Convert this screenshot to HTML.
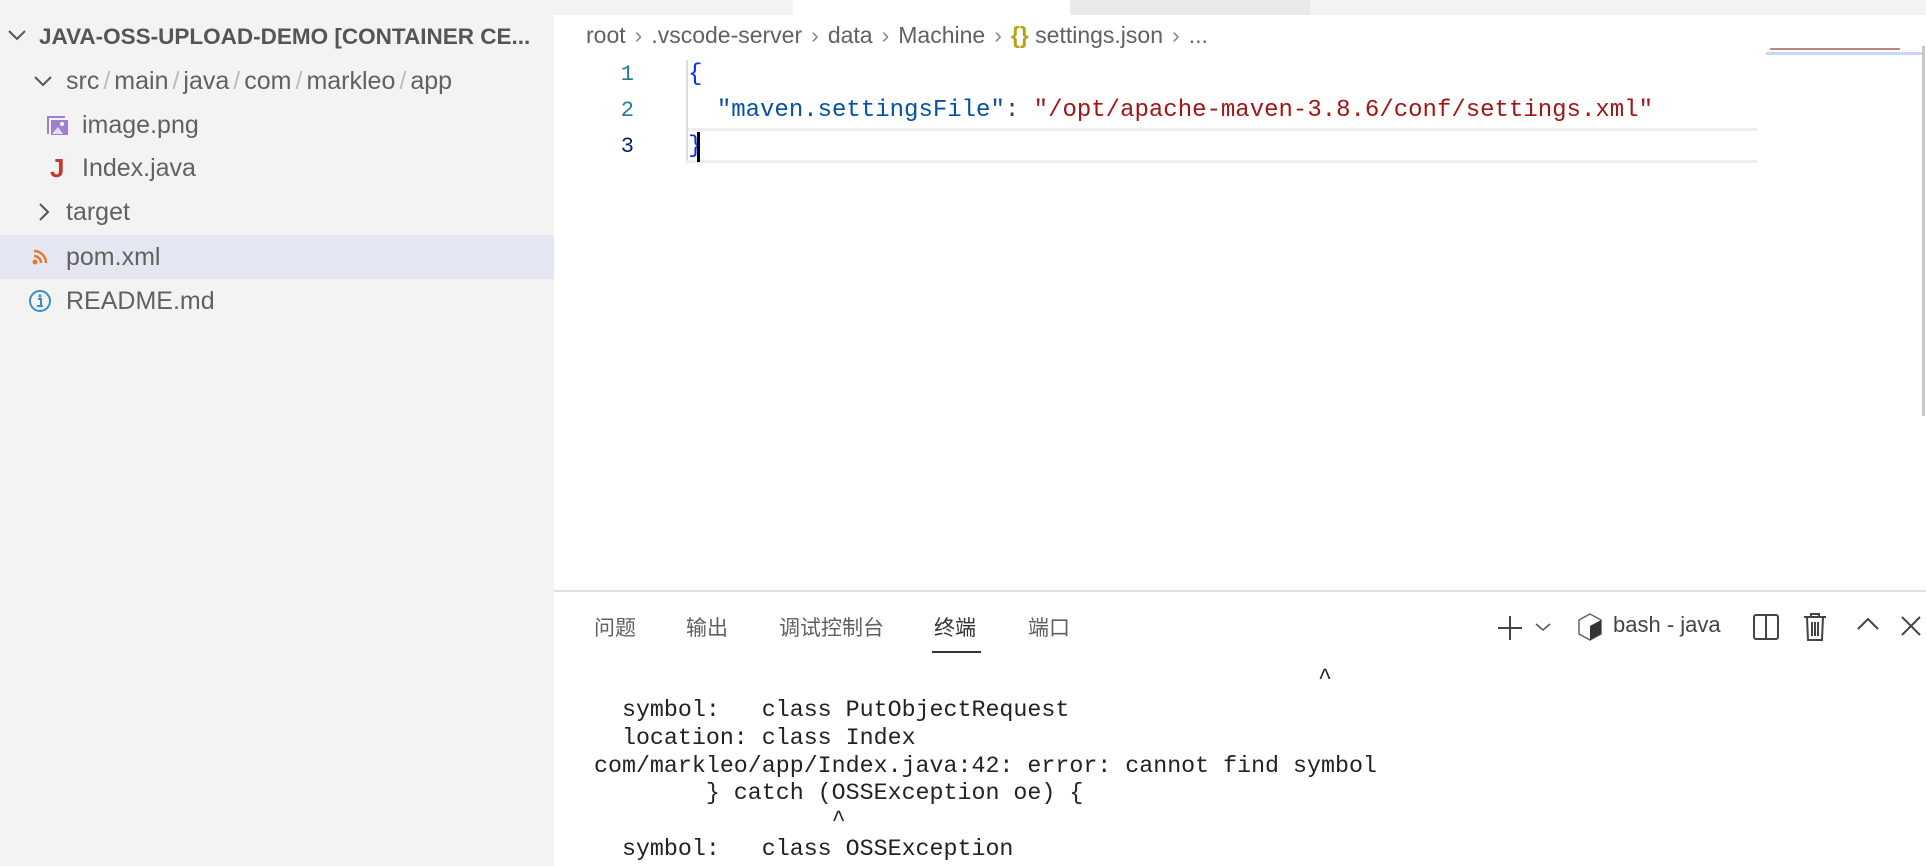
<!DOCTYPE html>
<html><head><meta charset="utf-8"><style>
*{margin:0;padding:0;box-sizing:border-box}
body{width:1926px;height:866px;overflow:hidden;background:#fff;font-family:"Liberation Sans","Noto Sans CJK SC",sans-serif;position:relative}
.a{position:absolute;white-space:nowrap}
#side{left:0;top:0;width:554px;height:866px;background:#f3f3f3}
.row{position:absolute;left:0;width:554px;height:44px;line-height:44px;font-size:25px;color:#616161}
.mono{font-family:"Liberation Mono",monospace}
.term{font-family:"Liberation Mono",monospace;font-size:23.3px;color:#222;line-height:28px;left:594px}
.sep{color:#bbb;margin:0 4px}
.bc{font-size:23px;color:#616161;top:22px;left:586px}
.bc .g{margin:0 9px;color:#888}
.tab{top:612px;font-size:21px;color:#616161}
</style></head><body>
<div class="a" style="left:554px;top:0;width:1372px;height:15px;background:#f3f3f3"></div>
<div class="a" style="left:793px;top:0;width:277px;height:15px;background:#fff"></div>
<div class="a" style="left:1070px;top:0;width:240px;height:15px;background:#e9e9e9"></div>
<div class="a" id="side"></div>
<div class="row" style="top:15px;font-weight:bold;font-size:22.5px;color:#555">
 <svg class="a" style="left:8px;top:14px" width="18" height="12"><path d="M1 2l8 8 8-8" fill="none" stroke="#555" stroke-width="2"/></svg>
 <span class="a" style="left:39px">JAVA-OSS-UPLOAD-DEMO [CONTAINER CE...</span></div>
<div class="row" style="top:59px">
 <svg class="a" style="left:34px;top:16px" width="18" height="12"><path d="M1 2l8 8 8-8" fill="none" stroke="#555" stroke-width="2"/></svg>
 <span class="a" style="left:66px">src<span class="sep">/</span>main<span class="sep">/</span>java<span class="sep">/</span>com<span class="sep">/</span>markleo<span class="sep">/</span>app</span></div>
<div class="row" style="top:103px">
 <svg class="a" style="left:46px;top:12px" width="24" height="22"><path d="M1 1h18v2H3v16H1z" fill="#9f7fcf"/><rect x="5" y="5" width="17" height="15" fill="#9f7fcf"/><circle cx="16" cy="9" r="2" fill="#fff"/><path d="M6 19l6-7 5 7z" fill="#e6dcf5"/></svg>
 <span class="a" style="left:82px">image.png</span></div>
<div class="row" style="top:146px">
 <span class="a" style="left:50px;color:#c5392f;font-weight:bold;font-size:26px">J</span>
 <span class="a" style="left:82px">Index.java</span></div>
<div class="row" style="top:190px">
 <svg class="a" style="left:38px;top:13px" width="12" height="18"><path d="M2 1l8 8-8 8" fill="none" stroke="#555" stroke-width="2"/></svg>
 <span class="a" style="left:66px">target</span></div>
<div class="row" style="top:235px;background:#e4e6f1">
 <svg class="a" style="left:32px;top:14px" width="16" height="16"><circle cx="3" cy="13" r="2.5" fill="#e37933"/><path d="M2 7a7 7 0 0 1 7 7M2 2a12 12 0 0 1 12 12" fill="none" stroke="#e37933" stroke-width="2.5"/></svg>
 <span class="a" style="left:66px">pom.xml</span></div>
<div class="row" style="top:279px">
 <svg class="a" style="left:28px;top:10px" width="24" height="24"><circle cx="12" cy="12" r="10" fill="none" stroke="#3d8ec4" stroke-width="2"/><circle cx="12" cy="7" r="1.5" fill="#3d8ec4"/><path d="M10 10h3v7M9 17h6" fill="none" stroke="#3d8ec4" stroke-width="2"/></svg>
 <span class="a" style="left:66px">README.md</span></div>

<div class="a bc">root<span class="g">›</span>.vscode-server<span class="g">›</span>data<span class="g">›</span>Machine<span class="g">›</span><span style="color:#b5a21a;font-weight:bold">{}</span> settings.json<span class="g">›</span>...</div>

<div class="a mono" style="left:600px;top:57px;width:34px;text-align:right;font-size:22px;color:#237893;line-height:36px">1<br>2<br><span style="color:#0b216f">3</span></div>
<div class="a" style="left:686px;top:128px;width:1071px;height:35px;border-top:3px solid #eee;border-bottom:3px solid #eee"></div>
<div class="a" style="left:686px;top:60px;width:2px;height:100px;background:#ddd"></div>
<div class="a mono" style="left:688px;top:57px;font-size:24px;line-height:36px;color:#3b3b3b">
<span style="color:#0431fa">{</span><br>&nbsp;&nbsp;<span style="color:#0451a5">"maven.settingsFile"</span>: <span style="color:#a31515">"/opt/apache-maven-3.8.6/conf/settings.xml"</span><br><span style="color:#0431fa">}</span></div>
<div class="a" style="left:697px;top:132px;width:3px;height:30px;background:#000"></div>
<div class="a" style="left:1766px;top:52px;width:158px;height:3px;background:#c7d7f5"></div>
<div class="a" style="left:1770px;top:48px;width:130px;height:2px;background:#b88"></div>
<div class="a" style="left:1922px;top:46px;width:3px;height:370px;background:#c8c8c8"></div>

<div class="a" style="left:554px;top:590px;width:1372px;height:2px;background:#e0e0e0"></div>
<div class="a tab" style="left:594px">问题</div>
<div class="a tab" style="left:686px">输出</div>
<div class="a tab" style="left:779px">调试控制台</div>
<div class="a tab" style="left:934px;color:#333">终端</div>
<div class="a tab" style="left:1028px">端口</div>
<div class="a" style="left:932px;top:651px;width:49px;height:2px;background:#333"></div>

<svg class="a" style="left:1496px;top:614px" width="28" height="28"><path d="M14 2v24M2 14h24" stroke="#444" stroke-width="2"/></svg>
<svg class="a" style="left:1535px;top:622px" width="16" height="10"><path d="M1 2l7 6 7-6" fill="none" stroke="#555" stroke-width="1.5"/></svg>
<svg class="a" style="left:1576px;top:612px" width="28" height="30"><path d="M14 2l11 6v14l-11 6-11-6V8z" fill="#fff" stroke="#666" stroke-width="1.5"/><path d="M14 14l11-6v14l-11 6z" fill="#333"/></svg>
<div class="a" style="left:1613px;top:612px;font-size:22px;color:#444">bash - java</div>
<svg class="a" style="left:1752px;top:613px" width="28" height="28"><rect x="2" y="2" width="24" height="24" rx="2" fill="none" stroke="#444" stroke-width="2"/><path d="M14 2v24" stroke="#444" stroke-width="2"/></svg>
<svg class="a" style="left:1802px;top:612px" width="26" height="30"><path d="M2 5h22M9 5V2h8v3M5 5l1 23h14l1-23M10 10v14M13 10v14M16 10v14" fill="none" stroke="#444" stroke-width="2"/></svg>
<svg class="a" style="left:1856px;top:616px" width="24" height="16"><path d="M2 13l10-10 10 10" fill="none" stroke="#444" stroke-width="2"/></svg>
<svg class="a" style="left:1900px;top:615px" width="22" height="22"><path d="M2 2l18 18M20 2L2 20" stroke="#444" stroke-width="2"/></svg>

<div class="a term" style="top:664px;left:1318px">^</div>
<div class="a term" style="top:696px">&nbsp;&nbsp;symbol:&nbsp;&nbsp;&nbsp;class PutObjectRequest</div>
<div class="a term" style="top:724px">&nbsp;&nbsp;location: class Index</div>
<div class="a term" style="top:752px">com/markleo/app/Index.java:42: error: cannot find symbol</div>
<div class="a term" style="top:779px">&nbsp;&nbsp;&nbsp;&nbsp;&nbsp;&nbsp;&nbsp;&nbsp;} catch (OSSException oe) {</div>
<div class="a term" style="top:806px">&nbsp;&nbsp;&nbsp;&nbsp;&nbsp;&nbsp;&nbsp;&nbsp;&nbsp;&nbsp;&nbsp;&nbsp;&nbsp;&nbsp;&nbsp;&nbsp;&nbsp;^</div>
<div class="a term" style="top:835px">&nbsp;&nbsp;symbol:&nbsp;&nbsp;&nbsp;class OSSException</div>
</body></html>
